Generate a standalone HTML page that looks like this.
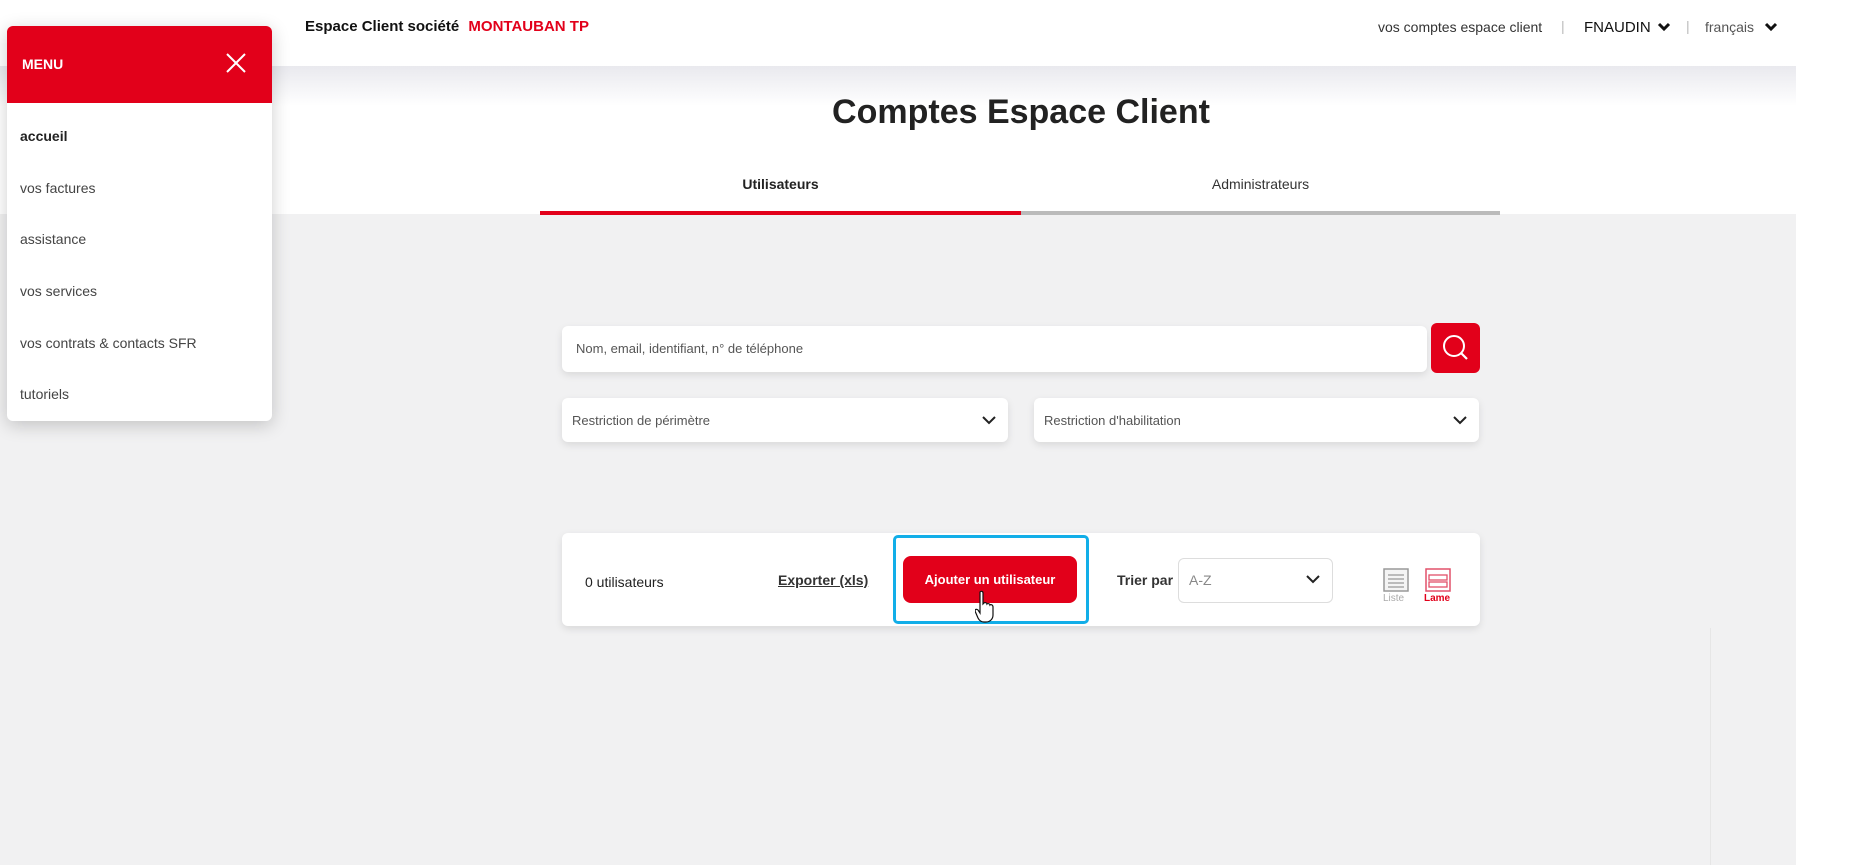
<!DOCTYPE html>
<html><head><meta charset="utf-8"><style>
*{box-sizing:border-box;margin:0;padding:0}
body{width:1856px;height:865px;background:#fff;font-family:"Liberation Sans",sans-serif;position:relative;overflow:hidden;color:#222}
.abs{position:absolute}
.main{left:0;top:66px;width:1796px;height:799px;background:#f1f1f2}
.band{left:0;top:66px;width:1796px;height:148px;background:linear-gradient(#e9e9ee 0,#fff 40px,#fff)}
.card{background:#fff;border-radius:6px;box-shadow:0 3px 8px rgba(0,0,0,.1)}
.t{white-space:nowrap}
.menu{left:7px;top:26px;width:265px;height:395px;background:#fff;border-radius:6px;box-shadow:0 4px 18px rgba(0,0,0,.2);overflow:hidden}
.mh{height:77px;background:#e2001a;position:relative}
.mi{position:absolute;left:13px;font-size:14px;color:#444;line-height:16px}
</style></head><body>
<div class="abs main"></div>
<div class="abs band"></div>
<div class="abs" style="left:1710px;top:628px;width:1px;height:237px;background:#e6e6e6"></div>

<div class="abs t" style="left:305px;top:18px;font-size:15px;font-weight:bold;color:#111">Espace Client société <span style="color:#e2001a;margin-left:5px">MONTAUBAN TP</span></div>
<div class="abs t" style="left:1378px;top:19px;font-size:14px;color:#333">vos comptes espace client</div>
<div class="abs t" style="left:1561px;top:18px;font-size:14px;color:#bbb">|</div>
<div class="abs t" style="left:1584px;top:19px;font-size:15px;color:#111">FNAUDIN</div>
<svg class="abs" style="left:1657px;top:22px" width="14" height="10" viewBox="0 0 14 10"><path d="M2 2l5 5 5-5" stroke="#111" stroke-width="3" fill="none"/></svg>
<div class="abs t" style="left:1686px;top:18px;font-size:14px;color:#bbb">|</div>
<div class="abs t" style="left:1705px;top:19px;font-size:14px;color:#555">français</div>
<svg class="abs" style="left:1764px;top:22px" width="14" height="10" viewBox="0 0 14 10"><path d="M2 2l5 5 5-5" stroke="#111" stroke-width="3" fill="none"/></svg>

<div class="abs t" style="left:0;width:2042px;text-align:center;top:93px;font-size:34px;line-height:38px;font-weight:900;color:#222">Comptes Espace Client</div>
<div class="abs t" style="left:540px;width:481px;text-align:center;top:176px;font-size:14px;font-weight:bold;color:#222">Utilisateurs</div>
<div class="abs t" style="left:1021px;width:479px;text-align:center;top:176px;font-size:14px;color:#333">Administrateurs</div>
<div class="abs" style="left:540px;top:211px;width:481px;height:4px;background:#e2001a"></div>
<div class="abs" style="left:1021px;top:211px;width:479px;height:4px;background:#bbb"></div>

<div class="abs card" style="left:562px;top:326px;width:865px;height:46px"></div>
<div class="abs t" style="left:576px;top:341px;font-size:13px;color:#555">Nom, email, identifiant, n° de téléphone</div>
<div class="abs" style="left:1431px;top:323px;width:49px;height:50px;background:#e2001a;border-radius:6px"></div>
<svg class="abs" style="left:1440px;top:332px" width="32" height="32" viewBox="0 0 32 32"><circle cx="14" cy="14" r="10" stroke="#fff" stroke-width="2" fill="none"/><path d="M21 21l6 6" stroke="#fff" stroke-width="2.2"/></svg>

<div class="abs card" style="left:562px;top:398px;width:446px;height:44px"></div>
<div class="abs t" style="left:572px;top:413px;font-size:13px;color:#555">Restriction de périmètre</div>
<svg class="abs" style="left:981px;top:414px" width="16" height="12" viewBox="0 0 16 12"><path d="M2 3l6 6 6-6" stroke="#222" stroke-width="2" fill="none"/></svg>
<div class="abs card" style="left:1034px;top:398px;width:445px;height:44px"></div>
<div class="abs t" style="left:1044px;top:413px;font-size:13px;color:#555">Restriction d'habilitation</div>
<svg class="abs" style="left:1452px;top:414px" width="16" height="12" viewBox="0 0 16 12"><path d="M2 3l6 6 6-6" stroke="#222" stroke-width="2" fill="none"/></svg>

<div class="abs card" style="left:562px;top:533px;width:918px;height:93px"></div>
<div class="abs t" style="left:585px;top:574px;font-size:14px;color:#222">0 utilisateurs</div>
<div class="abs t" style="left:778px;top:572px;font-size:14px;font-weight:bold;color:#333;text-decoration:underline">Exporter (xls)</div>
<div class="abs" style="left:893px;top:535px;width:196px;height:89px;border:3px solid #12aee8;border-radius:5px"></div>
<div class="abs" style="left:903px;top:556px;width:174px;height:47px;background:#e2001a;border-radius:8px;color:#fff;font-size:13px;font-weight:bold;text-align:center;line-height:47px">Ajouter un utilisateur</div>
<svg class="abs" style="left:975px;top:590px" width="22" height="34" viewBox="0 0 22 34"><path d="M5 2c1-1 3-1 3 1v11l1-1c1-1 3 0 3 1 1-1 3 0 3 1 1-1 3 0 3 2v8c0 4-3 7-7 7h-2c-3 0-5-2-6-4l-3-7c0-2 2-2 3-1l2 3V3z" fill="#fff" stroke="#111" stroke-width="1.2"/></svg>
<div class="abs t" style="left:1117px;top:572px;font-size:14px;font-weight:bold;color:#333">Trier par</div>
<div class="abs" style="left:1178px;top:558px;width:155px;height:45px;border:1px solid #ddd;border-radius:6px;background:#fff"></div>
<div class="abs t" style="left:1189px;top:572px;font-size:14px;color:#888">A-Z</div>
<svg class="abs" style="left:1305px;top:573px" width="16" height="12" viewBox="0 0 16 12"><path d="M2 3l6 6 6-6" stroke="#222" stroke-width="2" fill="none"/></svg>
<svg class="abs" style="left:1383px;top:568px" width="26" height="24" viewBox="0 0 26 24"><rect x="1" y="1" width="24" height="22" fill="#f4f4f4" stroke="#999" stroke-width="1.5"/><path d="M5 7h16M5 11h16M5 15h16M5 19h16" stroke="#999" stroke-width="1.3"/></svg>
<div class="abs t" style="left:1383px;top:593px;font-size:10px;color:#aaa">Liste</div>
<svg class="abs" style="left:1425px;top:568px" width="26" height="24" viewBox="0 0 26 24"><rect x="1" y="1" width="24" height="22" fill="#fff" stroke="#e2506a" stroke-width="1.5"/><rect x="4" y="7" width="18" height="5" fill="none" stroke="#e2506a" stroke-width="1.3"/><rect x="4" y="14" width="18" height="5" fill="none" stroke="#e2506a" stroke-width="1.3"/></svg>
<div class="abs t" style="left:1424px;top:593px;font-size:10px;font-weight:bold;color:#e2001a">Lame</div>

<div class="abs menu">
 <div class="mh"><div class="abs t" style="left:15px;top:30px;font-size:14px;font-weight:bold;color:#fff">MENU</div>
 <svg class="abs" style="left:216px;top:24px" width="26" height="26" viewBox="0 0 26 26"><path d="M4 4l18 18M22 4L4 22" stroke="#fff" stroke-width="2"/></svg></div>
 <div class="mi t" style="top:102px;font-weight:bold;color:#222">accueil</div>
 <div class="mi t" style="top:154px">vos factures</div>
 <div class="mi t" style="top:205px">assistance</div>
 <div class="mi t" style="top:257px">vos services</div>
 <div class="mi t" style="top:309px">vos contrats &amp; contacts SFR</div>
 <div class="mi t" style="top:360px">tutoriels</div>
</div>
</body></html>
